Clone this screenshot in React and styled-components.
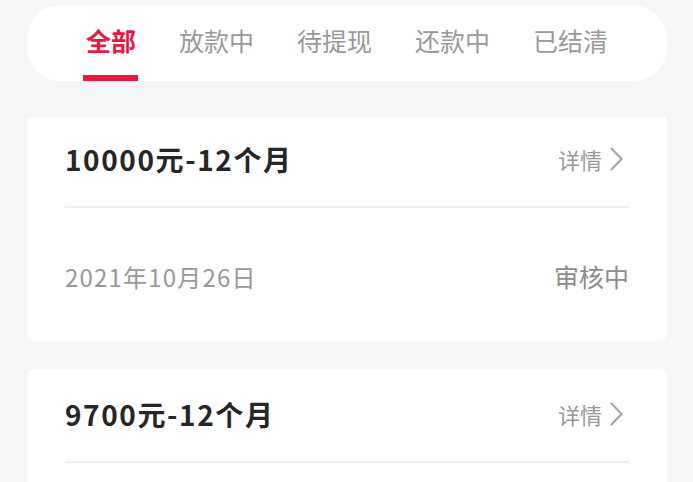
import React from "react";
import styled, { createGlobalStyle } from "styled-components";

const Global = createGlobalStyle`
  html, body { margin: 0; padding: 0; background: #f5f6f8; }
  body { font-family: "Noto Sans CJK SC", "Noto Sans", sans-serif; }
  * { box-sizing: border-box; }
`;

const Page = styled.div`
  width: 693px;
  height: 482px;
  overflow: hidden;
  background: #f5f6f8;
  padding: 5px 26px 0 27px;
  display: flex;
  flex-direction: column;
`;

const TabBar = styled.nav`
  height: 76px;
  background: #fff;
  border-radius: 34px;
  display: flex;
  justify-content: center;
  align-items: stretch;
  gap: 43px;
`;

const Tab = styled.div`
  position: relative;
  display: flex;
  align-items: center;
  padding-bottom: 6px;
  font-size: 25px;
  line-height: 1;
  font-weight: ${(p) => (p.$active ? 700 : 400)};
  color: ${(p) => (p.$active ? "#e8193f" : "#999")};
  &::after {
    content: "";
    display: ${(p) => (p.$active ? "block" : "none")};
    position: absolute;
    left: 50%;
    bottom: 0;
    width: 55px;
    margin-left: -27.5px;
    height: 6px;
    background: #e8193f;
  }
`;

const Viewport = styled.div`
  margin-top: 36px;
  flex: 1;
  overflow: hidden;
  display: flex;
  flex-direction: column;
  gap: 28px;
`;

const Card = styled.section`
  flex: none;
  background: #fff;
  border-radius: 8px;
  padding: 0 38px;
  &:first-child { margin-top: -3px; }
`;

const Header = styled.div`
  height: 94px;
  display: flex;
  align-items: center;
  justify-content: space-between;
  padding-bottom: 3px;
  border-bottom: ${(p) => (p.$last ? "none" : "2px solid #efefef")};
`;

const Title = styled.div`
  font-size: 28px;
  font-weight: 700;
  color: #262626;
  letter-spacing: 1.6px;
`;

const Detail = styled.div`
  display: flex;
  align-items: center;
  gap: 7px;
  font-size: 22px;
  color: #999;
  padding-right: 5px;
`;

const Body = styled.div`
  height: 133px;
  display: flex;
  align-items: center;
  justify-content: space-between;
  padding-top: 3px;
  font-size: 24px;
  letter-spacing: 1.2px;
  color: #999;
`;

const Status = styled.span`
  font-size: 25px;
  letter-spacing: 0;
  color: #8c8c8c;
`;

const Chevron = () => (
  <svg width="15" height="26" viewBox="0 0 15 26">
    <polyline points="2.5,2.5 12.5,13 2.5,23.5" fill="none" stroke="#a6a6a6" strokeWidth="2.2" strokeLinecap="round" strokeLinejoin="round" />
  </svg>
);

const tabs = ["全部", "放款中", "待提现", "还款中", "已结清"];
const loans = [
  { title: "10000元-12个月", date: "2021年10月26日", status: "审核中" },
  { title: "9700元-12个月" },
];

export default function App() {
  return (
    <>
      <Global />
      <Page>
        <TabBar>
          {tabs.map((t, i) => (
            <Tab key={t} $active={i === 0}>{t}</Tab>
          ))}
        </TabBar>
        <Viewport>
          {loans.map((l) => (
            <Card key={l.title}>
              <Header>
                <Title>{l.title}</Title>
                <Detail>详情<Chevron /></Detail>
              </Header>
              {l.date ? (
                <Body>
                  <span>{l.date}</span>
                  <Status>{l.status}</Status>
                </Body>
              ) : (
                <Body />
              )}
            </Card>
          ))}
        </Viewport>
      </Page>
    </>
  );
}
